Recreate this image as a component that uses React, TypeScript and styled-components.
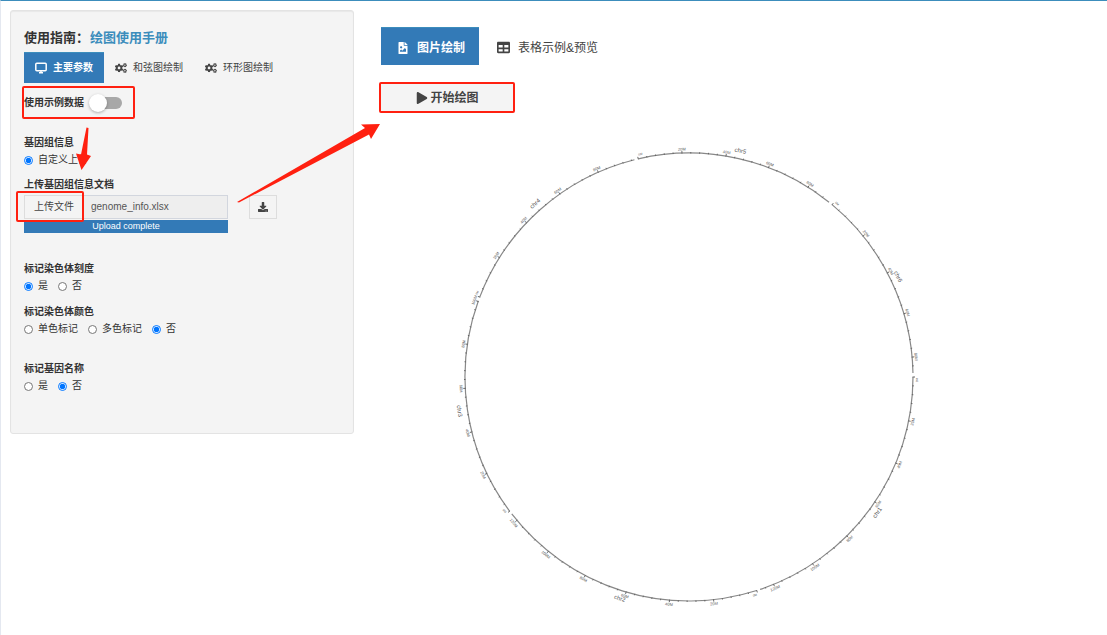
import React, { useState } from "react";
import styled, { createGlobalStyle, css } from "styled-components";
import { FaCogs, FaDownload, FaFileImage, FaPlay, FaTable } from "react-icons/fa";

const Global = createGlobalStyle`
  *, *::before, *::after { box-sizing: border-box; }
  body {
    margin: 0;
    background: #fff;
    color: #333;
    font: 10px/14px "Liberation Sans", "Noto Sans CJK SC", sans-serif;
  }
  button, input { font: inherit; color: inherit; }
`;

const Page = styled.div`
  min-height: 100vh;
  border-top: 1px solid #3c8dbc;
  border-left: 1px solid #e4e8f0;
  padding: 9px;
  display: grid;
  grid-template-columns: minmax(300px, 12fr) 25fr;
  gap: 27px;
  align-items: start;
`;

const Panel = styled.aside`
  background: #f4f4f4;
  border: 1px solid #e3e3e3;
  border-radius: 3px;
  padding: 18px 13px 40px;
  box-shadow: inset 0 1px 1px rgba(0, 0, 0, 0.05);
`;

const Guide = styled.h2`
  margin: 0;
  font-size: 13px;
  line-height: 18px;
  font-weight: 700;
`;

const GuideLink = styled.a`
  color: #3c8dbc;
  text-decoration: none;
  margin-left: 1px;
`;

const Tabs = styled.nav<{ $large?: boolean }>`
  display: flex;
  gap: ${(p) => (p.$large ? 2 : 0)}px;
  margin-top: ${(p) => (p.$large ? 0 : 5)}px;
`;

const Tab = styled.button<{ $active?: boolean; $large?: boolean }>`
  display: inline-flex;
  align-items: center;
  gap: 6px;
  height: 31px;
  padding: 0 11px;
  border: 0;
  border-top: 1px solid transparent;
  background: none;
  color: #444;
  white-space: nowrap;
  ${(p) => p.$large && css`
    height: 38px;
    padding: 2px 14px 0 16px;
    gap: 8px;
    font-size: 12px;
  `}
  ${(p) => p.$active && css`
    background: #337ab7;
    border-top-color: #3c8dbc;
    color: #fff;
    font-weight: 700;
  `}
`;

const SwitchRow = styled.label`
  display: flex;
  align-items: center;
  gap: 5px;
  height: 18px;
  margin-top: 11px;
  margin-bottom: 1px;
  font-weight: 700;
`;

const Switch = styled.input`
  appearance: none;
  margin: 0;
  width: 33px;
  height: 18px;
  display: flex;
  align-items: center;
  &::before {
    content: "";
    flex: none;
    z-index: 1;
    width: 18px;
    height: 18px;
    border-radius: 50%;
    background: #fff;
    box-shadow: 0 1px 3px rgba(0, 0, 0, 0.3);
  }
  &::after {
    content: "";
    flex: none;
    width: 24px;
    height: 12px;
    margin-left: -9px;
    border-radius: 6px;
    background: #a8a8a8;
  }
`;

const Group = styled.fieldset<{ $gap: number }>`
  border: 0;
  padding: 0;
  margin: ${(p) => p.$gap}px 0 0;
  min-width: 0;
`;

const Legend = styled.legend`
  padding: 0;
  font-weight: 700;
`;

const Options = styled.div`
  display: flex;
  gap: 10px;
  margin-top: 3px;
`;

const Option = styled.label`
  display: flex;
  align-items: center;
  gap: 5px;
`;

const Radio = styled.input`
  width: 9px;
  height: 9px;
  margin: 0;
`;

const UploadRow = styled.div`
  display: flex;
  align-items: flex-start;
  margin-top: 3px;
`;

const Upload = styled.div`
  width: 204px;
`;

const UploadFields = styled.div`
  display: flex;
  height: 24px;
`;

const FileButton = styled.button`
  width: 60px;
  padding: 0;
  background: #f4f4f4;
  border: 1px solid #ddd;
  color: #444;
`;

const FileName = styled.input`
  flex: 1;
  min-width: 0;
  padding: 0 7px;
  border: 1px solid #d2d6de;
  border-left: 0;
  background: #eee;
  color: #555;
`;

const Progress = styled.div`
  margin-top: 1px;
  height: 13px;
  background: #337ab7;
  color: #fff;
  font-size: 9px;
  line-height: 13px;
  text-align: center;
`;

const Download = styled.button`
  display: grid;
  place-items: center;
  width: 28px;
  height: 24px;
  padding: 0;
  margin-left: 21px;
  border: 1px solid #ddd;
  background: #f4f4f4;
  color: #444;
`;

const Main = styled.main`
  padding-top: 17px;
  display: flex;
  flex-direction: column;
  align-items: flex-start;
`;

const Start = styled.button`
  display: flex;
  align-items: center;
  justify-content: center;
  gap: 3px;
  width: 132px;
  height: 28px;
  margin-top: 19px;
  border: 0;
  background: #f4f4f4;
  color: #444;
  font-size: 12px;
  font-weight: 700;
`;

const Plot = styled.svg`
  width: 468px;
  height: 468px;
  margin: 31px 0 0 74px;
`;

const Annotations = styled.svg`
  position: absolute;
  left: 0;
  top: 0;
  width: 600px;
  height: 240px;
  pointer-events: none;
`;

const R = 224;
const MAJOR = 11.3;
const sectors = [
  { name: "chr1", from: 0, to: 71.5 },
  { name: "chr2", from: 72.4, to: 142.3 },
  { name: "chr3", from: 143.2, to: 199.9 },
  { name: "chr4", from: 200.9, to: 255.9 },
  { name: "chr5", from: 256.9, to: 308.7 },
  { name: "chr6", from: 309.7, to: 359 },
];

const at = (deg: number, r: number) => {
  const a = (deg * Math.PI) / 180;
  return { x: r * Math.cos(a), y: r * Math.sin(a) };
};

function Label({ deg, r, size, children }: { deg: number; r: number; size: number; children: string }) {
  const p = at(deg, r);
  const turn = deg < 180 ? deg - 90 : deg + 90;
  return (
    <text
      transform={`translate(${p.x} ${p.y}) rotate(${turn})`}
      fontSize={size}
      textAnchor="middle"
      dominantBaseline="central"
      fill="#555"
    >
      {children}
    </text>
  );
}

function Sector({ name, from, to }: { name: string; from: number; to: number }) {
  const a = at(from, R);
  const b = at(to, R);
  const count = Math.floor((to - from) / (MAJOR / 5)) + 1;
  return (
    <g>
      <path d={`M${a.x} ${a.y}A${R} ${R} 0 0 1 ${b.x} ${b.y}`} fill="none" stroke="#888" strokeWidth={1.2} />
      {Array.from({ length: count }, (_, i) => {
        const deg = from + (i * MAJOR) / 5;
        const major = i % 5 === 0;
        const p = at(deg, R - 0.5);
        const q = at(deg, R + (major ? 2 : 1));
        return (
          <g key={i}>
            <path d={`M${p.x} ${p.y}L${q.x} ${q.y}`} stroke="#666" strokeWidth={1} />
            {major && (
              <Label deg={deg + (i === 0 ? 0.8 : 0)} r={R + 4} size={i === 0 ? 3 : 4}>
                {`${i * 4}M`}
              </Label>
            )}
          </g>
        );
      })}
      <Label deg={(from + to) / 2} r={R + 8} size={6}>{name}</Label>
    </g>
  );
}

function RadioGroup({ name, title, gap, options, initial }: {
  name: string; title: string; gap: number; options: string[]; initial: string;
}) {
  const [value, setValue] = useState(initial);
  return (
    <Group $gap={gap}>
      <Legend>{title}</Legend>
      <Options>
        {options.map((o) => (
          <Option key={o}>
            <Radio type="radio" name={name} checked={value === o} onChange={() => setValue(o)} />
            {o}
          </Option>
        ))}
      </Options>
    </Group>
  );
}

const MonitorIcon = () => (
  <svg width="12" height="12" viewBox="0 0 12 12" fill="none" stroke="currentColor">
    <rect x="0.8" y="1.3" width="10.4" height="7.4" rx="1" strokeWidth="1.5" />
    <path d="M4 10.7h4M6 9v1.5" strokeWidth="1.4" />
  </svg>
);

export default function App() {
  return (
    <>
      <Global />
      <Page>
        <Panel>
          <Guide>使用指南：<GuideLink href="#manual">绘图使用手册</GuideLink></Guide>
          <Tabs>
            <Tab $active><MonitorIcon />主要参数</Tab>
            <Tab><FaCogs size={12} />和弦图绘制</Tab>
            <Tab><FaCogs size={12} />环形图绘制</Tab>
          </Tabs>
          <SwitchRow>使用示例数据<Switch type="checkbox" role="switch" /></SwitchRow>
          <RadioGroup name="genome" title="基因组信息" gap={24} options={["自定义上传"]} initial="自定义上传" />
          <Group $gap={11}>
            <Legend>上传基因组信息文档</Legend>
            <UploadRow>
              <Upload>
                <UploadFields>
                  <FileButton>上传文件</FileButton>
                  <FileName readOnly value="genome_info.xlsx" aria-label="上传基因组信息文档" />
                </UploadFields>
                <Progress>Upload complete</Progress>
              </Upload>
              <Download aria-label="下载"><FaDownload size={10} /></Download>
            </UploadRow>
          </Group>
          <RadioGroup name="scale" title="标记染色体刻度" gap={29} options={["是", "否"]} initial="是" />
          <RadioGroup name="color" title="标记染色体颜色" gap={12} options={["单色标记", "多色标记", "否"]} initial="否" />
          <RadioGroup name="gene" title="标记基因名称" gap={26} options={["是", "否"]} initial="否" />
        </Panel>
        <Main>
          <Tabs $large>
            <Tab $active $large><FaFileImage size={12} />图片绘制</Tab>
            <Tab $large><FaTable size={13} />表格示例&amp;预览</Tab>
          </Tabs>
          <Start><FaPlay size={12} />开始绘图</Start>
          <Plot viewBox="-234 -234 468 468" role="img" aria-label="chr1-chr6">
            {sectors.map((s) => <Sector key={s.name} {...s} />)}
          </Plot>
        </Main>
      </Page>
      <Annotations viewBox="0 0 600 240" aria-hidden="true">
        <g fill="none" stroke="#ff2010" strokeWidth="2">
          <rect x="23" y="87" width="111" height="31" rx="1" />
          <rect x="17" y="192" width="66" height="29" rx="1" />
          <rect x="380" y="83" width="134" height="29" rx="1" />
        </g>
        <g fill="#ff2010">
          <path d="M86.500 127.500L88.500 128L87 154.500L91 156L81.500 170L76 153.500L81 154.500Z" />
          <path d="M237 202L365 128L361 124.500L380 124L371 139L369 134.500L239 202.500Z" />
        </g>
      </Annotations>
    </>
  );
}
